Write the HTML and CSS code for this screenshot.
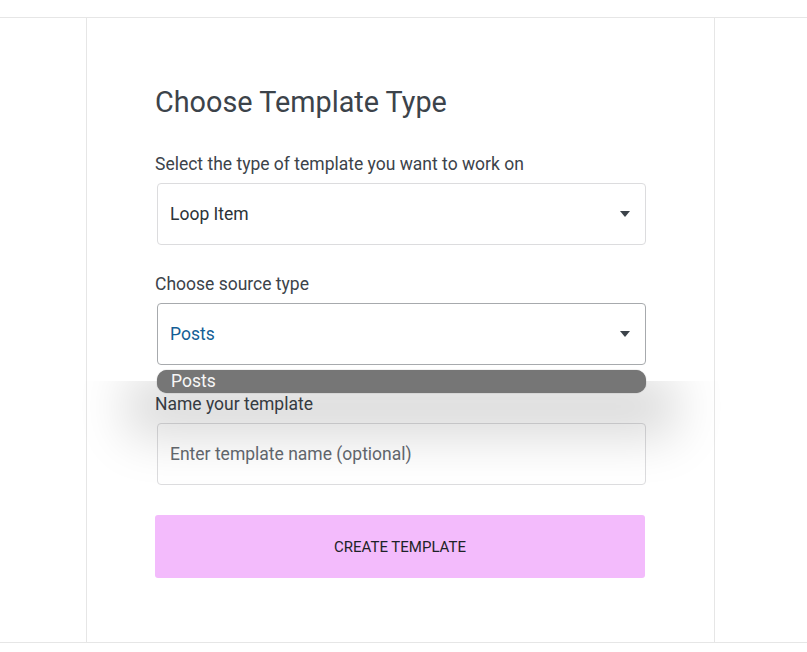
FILE: index.html
```html
<!DOCTYPE html>
<html lang="en">
<head>
<meta charset="utf-8">
<title>Choose Template Type</title>
<link rel="stylesheet" href="styles.css">
</head>
<body>
<div class="frame">
  <div class="card">
    <h1 class="title">Choose Template Type</h1>
    <div class="field field-type">
      <label class="label">Select the type of template you want to work on</label>
      <div class="select">
        <span class="select-value">Loop Item</span>
        <svg class="caret" width="10" height="6" viewBox="0 0 10 6"><path d="M0 0H10L5 6Z" fill="#3c434a"/></svg>
      </div>
    </div>
    <div class="field">
      <label class="label">Choose source type</label>
      <div class="select select-focus">
        <span class="select-value value-blue">Posts</span>
        <svg class="caret" width="10" height="6" viewBox="0 0 10 6"><path d="M0 0H10L5 6Z" fill="#3c434a"/></svg>
      </div>
      <div class="dropdown">
        <div class="option">Posts</div>
      </div>
    </div>
    <div class="field">
      <label class="label">Name your template</label>
      <div class="input"><span class="placeholder">Enter template name (optional)</span></div>
    </div>
    <button class="btn">CREATE TEMPLATE</button>
  </div>
</div>
</body>
</html>
```
FILE: styles.css
```css
* { box-sizing: border-box; }
html, body { margin: 0; padding: 0; background: #fff; }
body { font-family: Roboto, "Liberation Sans", sans-serif; color: #3c434a; }
.frame {
  margin-top: 17px;
  height: 626px;
  border-top: 1px solid #e6e6e6;
  border-bottom: 1px solid #e6e6e6;
}
.card {
  margin-left: 86px;
  width: 629px;
  height: 100%;
  border-left: 1px solid #e6e6e6;
  border-right: 1px solid #e6e6e6;
  padding: 66px 0 0 68px;
}
.title {
  margin: 0;
  font-size: 28.8px;
  line-height: 36px;
  font-weight: 400;
  color: #3c434a;
}
.field { display: flex; flex-direction: column; margin-top: 28px; position: relative; }
.field-type { margin-top: 33px; }
.label { font-size: 17.5px; line-height: 22px; color: #3c434a; margin-bottom: 8px; }
.select, .input {
  margin-left: 2px;
  width: 489px;
  height: 62px;
  border: 1px solid #dcdcde;
  border-radius: 4px;
  display: flex;
  align-items: center;
  justify-content: space-between;
  padding: 0 15px 0 12px;
  font-size: 17.5px;
  color: #2c3338;
  background: #fff;
}
.select-focus { border-color: #a7aaad; }
.value-blue { color: #135e96; }
.caret { flex: none; }
.placeholder { color: #646970; }
.dropdown {
  position: absolute;
  left: 2px;
  top: 97px;
  width: 489px;
  z-index: 2;
}
.dropdown::before {
  content: "";
  position: absolute;
  left: 0; right: 0;
  top: 11px;
  height: 1px;
  box-shadow: 0 25px 50px 30px rgba(0,0,0,.15);
  clip-path: inset(0 -300px -300px -300px);
}
.option {
  position: relative;
  height: 23px;
  background: #767676;
  border-radius: 10px;
  color: #f7f7f7;
  font-size: 17.5px;
  line-height: 23px;
  padding-left: 14px;
  box-shadow: 0 0 1px rgba(0,0,0,.6);
}
.btn {
  display: block;
  margin-top: 30px;
  width: 490px;
  height: 63px;
  border: 0;
  border-radius: 3px;
  background: #f3bbfc;
  color: #1d2327;
  font-family: Roboto, "Liberation Sans", sans-serif;
  font-size: 15px;
  font-weight: 400;
}
```
